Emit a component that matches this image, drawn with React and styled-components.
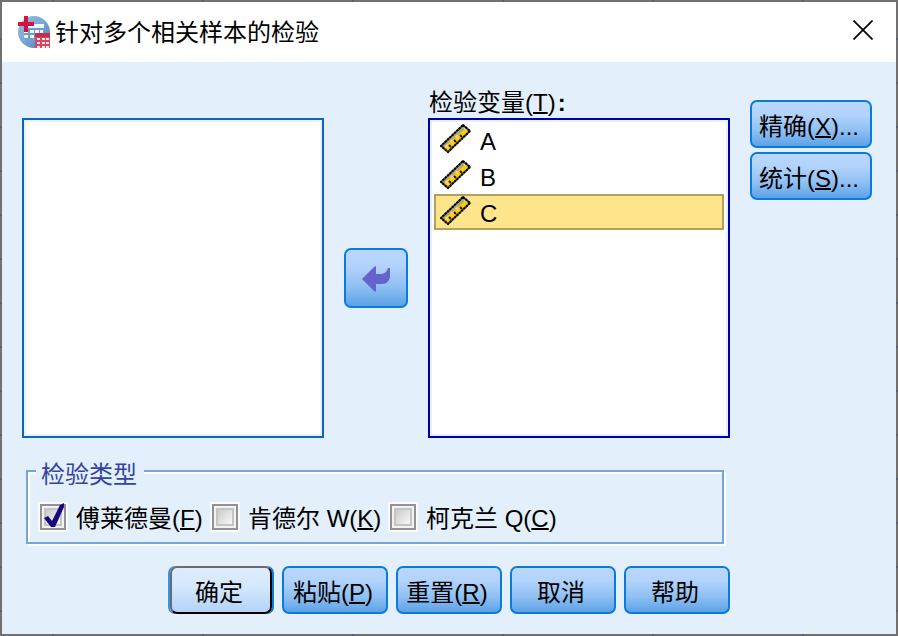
import React from 'react';
import styled, { createGlobalStyle, css } from 'styled-components';

const GlobalStyle = createGlobalStyle`
    * {
        box-sizing: border-box;
    }
    body {
        margin: 0;
        overflow: hidden;
        font-family: "Liberation Sans", "Noto Sans CJK SC", sans-serif;
        font-size: 24px;
        color: black;
    }
`
const Frame = styled.div`
    width: 898px;
    height: 636px;
    padding: 2px;
    background:
        repeating-linear-gradient(to right, transparent 0 52px, #59606f 52px 54px, transparent 54px 150px),
        repeating-linear-gradient(to bottom, transparent 0 38px, #59606f 38px 40px, transparent 40px 44px),
        #727071;
`
const TitleBar = styled.header`
    display: flex;
    align-items: center;
    height: 60px;
    padding: 0 23px 0 16px;
    background: white;
    svg {
        flex: none;
    }
`
const Title = styled.h1`
    flex: 1;
    margin: -3px 0 0 5px;
    font: 400 24px/36px "Noto Sans CJK SC", sans-serif;
`
const CloseButton = styled.button`
    display: flex;
    padding: 0;
    margin-top: -4px;
    border: none;
    background: none;
`
const Body = styled.main`
    height: 572px;
    padding: 24px 20px 0;
    background: #e3effb;
`
const Columns = styled.div`
    display: flex;
    align-items: flex-start;
    gap: 20px;
`
const Label = styled.div`
    height: 32px;
    padding-left: 1px;
    line-height: 34px;
    white-space: nowrap;
    b {
        margin-left: 2px;
    }
`
const Key = styled.span`
    text-decoration: underline;
    text-decoration-thickness: 2px;
    text-decoration-skip-ink: none;
    text-underline-offset: 1px;
`
const List = styled.div`
    width: 302px;
    height: 320px;
    margin-top: ${props => props.$top || 0}px;
    padding: 2px 4px;
    border: 2px solid ${props => props.$color};
    background: white;
    box-shadow: inset 0 0 0 2px #e9f2fb;
`
const Item = styled.div`
    display: flex;
    align-items: center;
    gap: 9px;
    height: 36px;
    padding-left: 4px;
    border: 2px solid transparent;
    line-height: 32px;
    ${props => props.$selected && css`
        border-color: #b3a05c;
        background: #fee58c;
    `}
    svg {
        margin-top: -3px;
    }
    span {
        padding-top: 3px;
    }
`
const SideButtons = styled.div`
    display: flex;
    flex-direction: column;
    gap: 4px;
    margin-top: 14px;
`
const Button = styled.button`
    display: flex;
    align-items: center;
    justify-content: center;
    width: ${props => props.$width || 106}px;
    height: ${props => props.$height || 48}px;
    padding: 0 4px 0 0;
    border: 2px solid #0a7bdc;
    border-radius: 7px;
    background: linear-gradient(#bad8fd, #b1d2fb 30%, #8fc0f2 65%, #5ca3e7);
    font: inherit;
    color: black;
    white-space: pre;
`
const DefaultButton = styled(Button)`
    border-color: #6b6b6f black black #6b6b6f;
    width: 102px;
    margin: 0 2px;
    background: linear-gradient(#deecfd, #d6e8fc 40%, #b1d4f8);
    box-shadow: -2px 0 0 #3593e6, 2px 0 0 #0a7bdc;
`
const ArrowButton = styled(Button)`
    margin-top: 162px;
    padding: 2px 0 0;
`
const Group = styled.section`
    width: 698px;
    height: 74px;
    margin: 32px 0 0 4px;
    border: 2px solid #76a5d6;
    box-shadow: 2px 2px 0 white, inset 2px 2px 0 white;
`
const Legend = styled.h2`
    width: 108px;
    height: 32px;
    margin: -14px 0 0 8px;
    padding-left: 5px;
    background: #e3effb;
    font: 400 24px/30px "Noto Sans CJK SC", sans-serif;
    color: #35439f;
`
const Options = styled.div`
    display: flex;
    padding: 12px 0 0 10px;
`
const Option = styled.label`
    display: flex;
    align-items: center;
    width: ${props => props.$width}px;
    height: 30px;
    line-height: 30px;
    white-space: pre;
`
const OptionText = styled.span`
    padding: 3px 0 0 1px;
`
const Box = styled.span`
    width: 30px;
    height: 30px;
    margin-right: 7px;
    padding: 6px;
    border: 2px solid #f8fafc;
    background: linear-gradient(135deg, #cacaca, #f8f8f8) content-box, #f2f2f2;
    box-shadow: inset 0 0 0 2px #929292, inset 0 0 0 4px #f2f2f2, inset 0 0 0 6px #c5c5c5;
    svg {
        display: block;
        margin: -7px 0 0 -2px;
        overflow: visible;
    }
`
const Actions = styled.div`
    display: flex;
    gap: 8px;
    margin: 22px 0 0 146px;
`

function AppIcon() {
    return (
        <svg width="32" height="32" viewBox="0 0 32 32">
            <defs>
                <linearGradient id="globe" x1="0" y1="0" x2="1" y2="1">
                    <stop offset="0" stopColor="#9abbd9" />
                    <stop offset="0.5" stopColor="#79a9d2" />
                    <stop offset="1" stopColor="#3f78ae" />
                </linearGradient>
            </defs>
            <circle cx="16" cy="16" r="16" fill="url(#globe)" />
            <path d="M6 9h20v14H6z" fill="#6d9dcc" />
            <path d="M10 8h16v4H10zM6 14h4v3H6zM12 14h4v3h-4zM17 14h4v3h-4zM6 19h4v3H6zM12 19h4v3h-4z" fill="#f5f8fc" />
            <path d="M22 14h3v3h-3z" fill="#f5f8fc" />
            <path d="M0 6h6V0h4v6h6v4h-6v6H6v-6H0z" fill="#cf1440" />
            <path d="M17 17h15v15H17z" fill="#d94662" />
            <path d="M17 17h15v4H17z" fill="#c92c46" />
            <path d="M19 22h3v2h-3zM24 22h3v2h-3zM28 22h3v2h-3zM19 26h3v2h-3zM24 26h3v2h-3zM28 26h3v2h-3zM19 30h3v2h-3zM24 30h3v2h-3zM28 30h3v2h-3z" fill="#fbe6ea" />
        </svg>
    );
}

function Ruler() {
    return (
        <svg width="31" height="30" viewBox="0 0 31 30">
            <path d="M23 1L30 7L8 28L1 22Z" fill="#a9ab78" />
            <path d="M25 5L28 8L8 27L4 23Z" fill="#ffcc00" />
            <path d="M6 23l2-2M11 18l2-2M16 13.500l2-2" stroke="#ffc99a" strokeWidth="3" />
            <path d="M24 5l3-1 1 3" fill="none" stroke="#d9dcae" strokeWidth="2" />
            <path d="M9 21l2 2M14 16l2 2M20 11l2 2" stroke="#1d1b08" strokeWidth="2" />
            <path d="M23 1L30 7L8 28L1 22Z" fill="none" stroke="#45453a" strokeWidth="1.8" />
            <path d="M23 1L30 7L8 28L1 22Z" fill="none" stroke="black" strokeWidth="2" strokeDasharray="2 1.2" />
        </svg>
    );
}

function Arrow() {
    return (
        <svg width="28" height="26" viewBox="0 0 28 26">
            <path d="M0 13L12 1L14 0V8H20C24 7 25 5 26 2H28V11C27 15 25 18 20 18H14V26L12 25Z" fill="#6662cf" />
        </svg>
    );
}

function CheckBox({ label, hotkey, width, checked }) {
    return (
        <Option $width={width}>
            <Box>
                {checked && (
                    <svg width="20" height="24" viewBox="0 0 20 24">
                        <path d="M0 15L4 13L8 18L16 2L20 0V4L11 24H7Z" fill="#14077f" />
                    </svg>
                )}
            </Box>
            <OptionText>{label}(<Key>{hotkey}</Key>)</OptionText>
        </Option>
    );
}

function App() {
    const variables = ['A', 'B', 'C'];
    return (
        <>
            <GlobalStyle />
            <Frame>
                <TitleBar>
                    <AppIcon />
                    <Title>针对多个相关样本的检验</Title>
                    <CloseButton aria-label="关闭">
                        <svg width="20" height="20" viewBox="0 0 20 20">
                            <path d="M0.5 0.5L19.5 19.5M19.5 0.5L0.5 19.5" stroke="black" strokeWidth="1.7" />
                        </svg>
                    </CloseButton>
                </TitleBar>
                <Body>
                    <Columns>
                        <List $color="#0c67b9" $top={32} />
                        <ArrowButton $width={64} $height={60}><Arrow /></ArrowButton>
                        <div>
                            <Label>检验变量(<Key>T</Key>)<b>:</b></Label>
                            <List $color="#0000aa">
                                {variables.map(name => (
                                    <Item key={name} $selected={name === 'C'}>
                                        <Ruler />
                                        <span>{name}</span>
                                    </Item>
                                ))}
                            </List>
                        </div>
                        <SideButtons>
                            <Button $width={122}><span>精确(<Key>X</Key>)...</span></Button>
                            <Button $width={122}><span>统计(<Key>S</Key>)...</span></Button>
                        </SideButtons>
                    </Columns>
                    <Group>
                        <Legend>检验类型</Legend>
                        <Options>
                            <CheckBox label="傅莱德曼" hotkey="F" width={172} checked />
                            <CheckBox label="肯德尔 W" hotkey="K" width={178} />
                            <CheckBox label="柯克兰 Q" hotkey="C" width={180} />
                        </Options>
                    </Group>
                    <Actions>
                        <DefaultButton>确定</DefaultButton>
                        <Button><span>粘贴(<Key>P</Key>)</span></Button>
                        <Button><span>重置(<Key>R</Key>)</span></Button>
                        <Button>取消</Button>
                        <Button>帮助</Button>
                    </Actions>
                </Body>
            </Frame>
        </>
    );
}

export default App;
